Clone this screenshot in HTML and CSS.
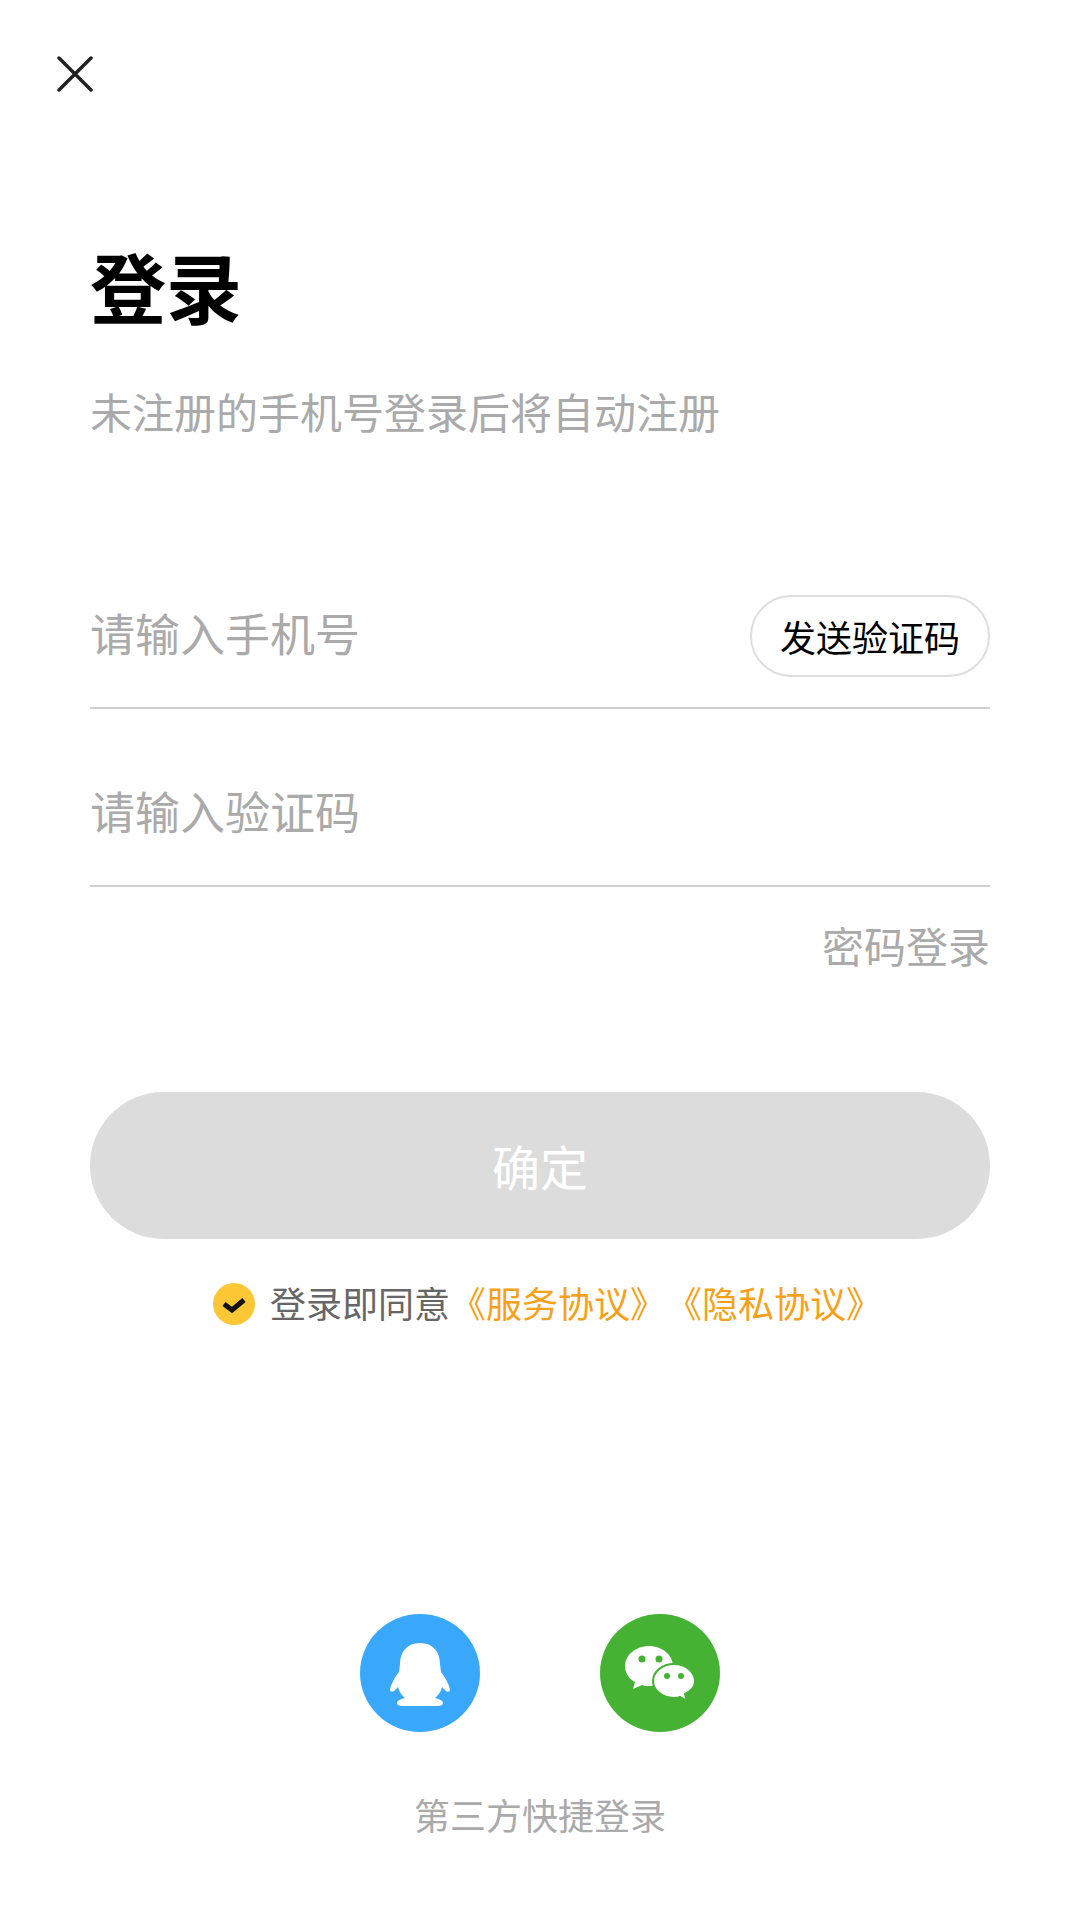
FILE: index.html
```html
<!DOCTYPE html>
<html lang="zh">
<head>
    <meta charset="UTF-8">
    <title>登录</title>
    <link rel="stylesheet" href="styles.css">
</head>
<body>
    <div class="page">
        <div class="close-row">
            <svg class="close-icon" width="36" height="36" viewBox="0 0 36 36">
                <path d="M2 2 L34 34 M34 2 L2 34" stroke="#222" stroke-width="3.5" stroke-linecap="round" fill="none"/>
            </svg>
        </div>

        <div class="content">
            <h1>登录</h1>
            <p class="subtitle">未注册的手机号登录后将自动注册</p>

            <div class="field field-phone">
                <span class="placeholder">请输入手机号</span>
                <button class="send-btn">发送验证码</button>
            </div>
            <div class="field field-code">
                <span class="placeholder">请输入验证码</span>
            </div>
            <div class="password-link">密码登录</div>

            <button class="submit-btn">确定</button>

            <div class="agreement">
                <svg class="check-icon" width="42" height="42" viewBox="0 0 42 42">
                    <circle cx="21" cy="21" r="21" fill="#fcc735"/>
                    <path d="M11 21 L19 27 L31 17" stroke="#111" stroke-width="5" fill="none"/>
                </svg>
                <span class="agree-text">登录即同意</span><span class="agree-link">《服务协议》《隐私协议》</span>
            </div>
        </div>

        <div class="third-party">
            <div class="icons">
                <svg width="120" height="118" viewBox="0 0 120 118">
                    <ellipse cx="60" cy="59" rx="60" ry="59" fill="#39a8fb"/>
                    <path d="M60 29 C47 29 40 38 40 50 L39 58 C35 63 31 70 30 76 C31 79 34 78 38 73 C39 77 41 81 45 84 C40 85 37 87 37 89 C37 91 39 92 42 92 L78 92 C81 92 83 91 83 89 C83 87 80 85 75 84 C79 81 81 77 82 73 C86 78 89 79 90 76 C89 70 85 63 81 58 L80 50 C80 38 73 29 60 29 Z" fill="#fff"/>
                </svg>
                <svg width="120" height="118" viewBox="0 0 120 118">
                    <ellipse cx="60" cy="59" rx="60" ry="59" fill="#45b234"/>
                    <path d="M49 32 C36 32 25 41 25 52 C25 59 29 65 35 68 L33 75 L42 71 C44 72 47 72 49 72 C62 72 73 63 73 52 C73 41 62 32 49 32 Z" fill="#fff"/>
                    <path d="M74 50 C62 50 53 58 53 67 C53 76 62 84 74 84 C76 84 78 84 80 83 L87 87 L85 80 C91 77 95 72 95 67 C95 58 86 50 74 50 Z" fill="#fff" stroke="#45b234" stroke-width="2"/>
                    <circle cx="42" cy="45" r="3.5" fill="#45b234"/>
                    <circle cx="59" cy="45" r="3.5" fill="#45b234"/>
                    <circle cx="67" cy="62" r="3" fill="#45b234"/>
                    <circle cx="81" cy="62" r="3" fill="#45b234"/>
                </svg>
            </div>
            <div class="third-label">第三方快捷登录</div>
        </div>
    </div>
</body>
</html>
```

FILE: styles.css
```css
* {
    box-sizing: border-box;
}
body {
    margin: 0;
    background-color: #fff;
    font-family: "Liberation Sans", "Noto Sans CJK SC", sans-serif;
}
.page {
    width: 1080px;
    height: 1920px;
    display: flex;
    flex-direction: column;
}
.close-row {
    height: 242px;
    padding: 56px 0 0 57px;
}
.close-icon {
    display: block;
}
.content {
    padding: 0 90px;
}
h1 {
    margin: 0;
    font-size: 76px;
    line-height: 100px;
    font-weight: 700;
    color: #000;
}
.subtitle {
    margin: 43px 0 0;
    font-size: 42px;
    line-height: 60px;
    color: #aaa;
}
.field {
    display: flex;
    align-items: center;
    justify-content: space-between;
    height: 178px;
    padding-top: 55px;
    padding-bottom: 22px;
    border-bottom: 2px solid #d0d0d0;
}
.field-phone {
    margin-top: 86px;
}
.placeholder {
    margin-bottom: 6px;
    font-size: 45px;
    color: #aaa;
}
.send-btn {
    width: 240px;
    height: 82px;
    background-color: #fff;
    border: 2px solid #dedede;
    border-radius: 41px;
    font-family: inherit;
    font-size: 36px;
    color: #000;
    padding: 0;
}
.password-link {
    margin-top: 36px;
    text-align: right;
    font-size: 42px;
    line-height: 52px;
    color: #aaa;
}
.submit-btn {
    display: block;
    width: 100%;
    height: 147px;
    margin-top: 117px;
    padding: 0 0 2px;
    background-color: #dcdcdc;
    border: none;
    border-radius: 74px;
    font-family: inherit;
    font-size: 48px;
    color: #fff;
}
.agreement {
    display: flex;
    align-items: flex-start;
    justify-content: center;
    margin-top: 44px;
    padding-left: 15px;
    font-size: 36px;
    line-height: 42px;
}
.check-icon {
    margin-right: 15px;
}
.agree-text {
    margin-top: 2px;
    color: #666;
}
.agree-link {
    margin-top: 2px;
    color: #f7a11a;
    text-spacing-trim: space-all;
}
.third-party {
    margin-top: 287px;
    display: flex;
    flex-direction: column;
    align-items: center;
}
.icons {
    display: flex;
    gap: 120px;
}
.third-label {
    margin-top: 63px;
    font-size: 36px;
    line-height: 46px;
    color: #aaa;
}
```
